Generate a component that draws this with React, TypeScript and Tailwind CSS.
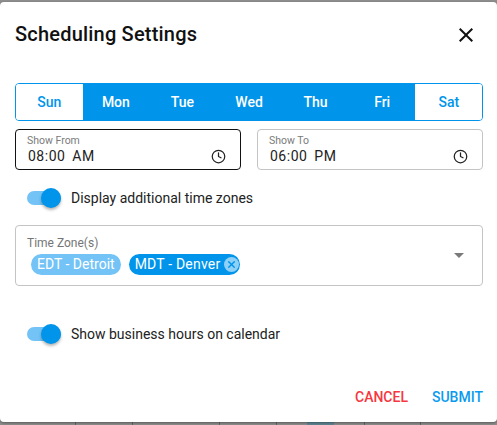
import { Clock, X } from 'lucide-react'

const days = ['Sun', 'Mon', 'Tue', 'Wed', 'Thu', 'Fri', 'Sat']
const active = ['Mon', 'Tue', 'Wed', 'Thu', 'Fri']

function Toggle() {
  return (
    <div className="flex h-[20px] w-[34px] shrink-0 items-center">
      <div className="flex h-[14px] w-[34px] items-center justify-end rounded-full bg-[#73c3f7]">
        <div className="h-[20px] w-[20px] rounded-full bg-[#0095eb] shadow-[0_2px_3px_rgba(0,0,0,0.3)]" />
      </div>
    </div>
  )
}

function TimeField({ label, value, focused }: { label: string; value: string; focused?: boolean }) {
  return (
    <div
      className={
        'flex h-[41px] w-[226px] items-end justify-between rounded-[4px] border pb-[5px] pl-[11px] pr-[14px] ' +
        (focused ? 'border-[#111111]' : 'border-[#c4c4c4]')
      }
    >
      <div className="flex flex-col">
        <span className="text-[10.5px] leading-[12px] text-[#7b7b7b]">{label}</span>
        <span className="mt-[1px] pl-[1px] text-[14px] leading-[16px] tracking-[0.5px] text-[#222222] [word-spacing:3px]">{value}</span>
      </div>
      <Clock className="h-[15px] w-[15px] text-[#222222]" strokeWidth={2} />
    </div>
  )
}

export default function App() {
  return (
    <div className="flex h-[425px] w-[497px] flex-col overflow-hidden bg-[#8f8f8f] font-['Roboto',sans-serif]">
      <div className="relative mt-[2px] flex h-[420px] shrink-0 flex-col rounded-[4px] bg-white pl-[15px] pr-[14px] shadow-[0_1px_3px_rgba(0,0,0,0.4)]">
        <div className="flex h-[64px] items-center justify-between">
          <h1 className="text-[20px] font-medium leading-[24px] tracking-[0.2px] text-[#111111]">Scheduling Settings</h1>
          <svg className="mr-[5px] mt-[2px] h-[24px] w-[24px] fill-[#111111]" viewBox="0 0 24 24">
            <path d="M19 6.41 17.59 5 12 10.59 6.41 5 5 6.41 10.59 12 5 17.59 6.41 19 12 13.41 17.59 19 19 17.59 13.41 12z" />
          </svg>
        </div>
        <div className="mt-[17px] flex h-[38px] overflow-hidden rounded-[4px] border border-[#0095eb]">
          {days.map((d) => (
            <div
              key={d}
              className={
                'flex flex-1 items-center justify-center text-[14px] font-medium ' +
                (active.includes(d) ? 'bg-[#0095eb] text-white' : 'bg-white text-[#0095eb]')
              }
            >
              {d}
            </div>
          ))}
        </div>
        <div className="mt-[8px] flex justify-between">
          <TimeField label="Show From" value="08:00 AM" focused />
          <TimeField label="Show To" value="06:00 PM" />
        </div>
        <div className="mt-[18px] flex items-center gap-[10px] pl-[12px]">
          <Toggle />
          <span className="text-[14px] leading-[20px] text-[#222222]">Display additional time zones</span>
        </div>
        <div className="mt-[17px] flex h-[61px] items-center justify-between rounded-[4px] border border-[#c4c4c4] pl-[11px] pr-[18px]">
          <div className="flex flex-col">
            <span className="text-[12px] leading-[13px] text-[#757575]">Time Zone(s)</span>
            <div className="mt-[4px] flex gap-[8px] pl-[4px]">
              <span className="flex h-[21px] items-center rounded-full bg-[#73c3f7] px-[6px] text-[14px] text-white">EDT - Detroit</span>
              <span className="flex h-[21px] items-center gap-[4px] rounded-full bg-[#0095eb] pl-[6px] pr-[1px] text-[14px] tracking-[0.2px] text-white">
                MDT - Denver
                <span className="flex h-[15px] w-[15px] items-center justify-center rounded-full bg-[#8fd0f7]">
                  <X className="h-[11px] w-[11px] text-[#0095eb]" strokeWidth={3} />
                </span>
              </span>
            </div>
          </div>
          <div className="h-0 w-0 border-x-[5px] border-t-[5px] border-x-transparent border-t-[#7a7a7a]" />
        </div>
        <div className="mt-[38px] flex items-center gap-[10px] pl-[12px]">
          <Toggle />
          <span className="text-[14px] leading-[20px] text-[#222222]">Show business hours on calendar</span>
        </div>
        <div className="mt-auto mb-[17px] flex justify-end gap-[24px] text-[14px] font-medium leading-[16px]">
          <span className="text-[#f6373f]">CANCEL</span>
          <span className="text-[#0a9bef]">SUBMIT</span>
        </div>
      </div>
      {/* calendar peeking out behind the dialog */}
      <div className="flex h-[3px]">
        <div className="w-[76px] border-r border-[#666666]" />
        <div className="w-[57px] border-r border-[#666666]" />
        <div className="w-[87px] border-r border-[#666666]" />
        <div className="w-[57px] border-r border-[#666666]" />
        <div className="w-[30px]" />
        <div className="w-[27px] bg-[#5f8796]" />
        <div className="w-[31px] border-r border-[#666666]" />
        <div className="w-[56px] border-r border-[#666666]" />
      </div>
    </div>
  )
}
